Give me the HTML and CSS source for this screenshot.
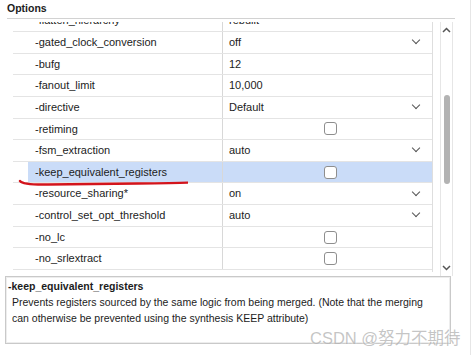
FILE: index.html
```html
<!DOCTYPE html>
<html lang="en">
<head>
    <meta charset="UTF-8">
    <title>Options</title>
    <link rel="stylesheet" href="styles.css">
</head>
<body>
<div class="panel">
    <div class="title">Options</div>
    <div class="body">
        <div class="table">
            <div class="row first"><span class="tree"></span><span class="name">-flatten_hierarchy</span><span class="val">rebuilt</span></div>
            <div class="row"><span class="tree"></span><span class="name">-gated_clock_conversion</span><span class="val">off<i class="drop"></i></span></div>
            <div class="row"><span class="tree"></span><span class="name">-bufg</span><span class="val">12</span></div>
            <div class="row"><span class="tree"></span><span class="name">-fanout_limit</span><span class="val">10,000</span></div>
            <div class="row"><span class="tree"></span><span class="name">-directive</span><span class="val">Default<i class="drop"></i></span></div>
            <div class="row"><span class="tree"></span><span class="name">-retiming</span><span class="val check"><i class="box"></i></span></div>
            <div class="row"><span class="tree"></span><span class="name">-fsm_extraction</span><span class="val">auto<i class="drop"></i></span></div>
            <div class="row sel"><span class="tree"></span><span class="name">-keep_equivalent_registers</span><span class="val check"><i class="box"></i></span></div>
            <div class="row"><span class="tree"></span><span class="name">-resource_sharing*</span><span class="val">on<i class="drop"></i></span></div>
            <div class="row"><span class="tree"></span><span class="name">-control_set_opt_threshold</span><span class="val">auto<i class="drop"></i></span></div>
            <div class="row"><span class="tree"></span><span class="name">-no_lc</span><span class="val check"><i class="box"></i></span></div>
            <div class="row"><span class="tree"></span><span class="name">-no_srlextract</span><span class="val check"><i class="box"></i></span></div>
        </div>
        <div class="scrollbar">
            <div class="arrow up"><svg width="9" height="6" viewBox="0 0 9 6"><polyline points="1,5 4.5,1.5 8,5" fill="none" stroke="#555" stroke-width="1.5"/></svg></div>
            <div class="track"><div class="thumb"></div></div>
            <div class="arrow down"><svg width="9" height="6" viewBox="0 0 9 6"><polyline points="1,1 4.5,4.5 8,1" fill="none" stroke="#555" stroke-width="1.5"/></svg></div>
        </div>
    </div>
    <div class="desc">
        <div class="desc-title">-keep_equivalent_registers</div>
        <div class="desc-text">Prevents registers sourced by the same logic from being merged. (Note that the merging can otherwise be prevented using the synthesis KEEP attribute)</div>
    </div>
    <svg class="mark" width="170" height="12" viewBox="0 0 170 12"><path d="M2 3 Q5 7 30 6.5 L120 5.5 Q160 5 172 4.5" fill="none" stroke="#d3141c" stroke-width="2.4" stroke-linecap="round"/></svg>
    <div class="watermark">CSDN @努力不期待</div>
</div>
</body>
</html>
```
FILE: styles.css
```css
*{
    margin:0;
    padding:0;
    box-sizing: border-box;
}
body{
    background: #fff;
    font-family: "Liberation Sans", Arial, sans-serif;
    color: #1c1c1c;
}
.panel{
    position: relative;
    width: 471px;
    height: 355px;
    border-right: 1px solid #e6e6e6;
}
.title{
    margin-left: 7px;
    width: 448px;
    height: 19px;
    border-bottom: 1px solid #d2d2d2;
    font-size: 10.5px;
    font-weight: bold;
    line-height: 17px;
}
.body{
    display: flex;
    margin-top: 3px;
    margin-left: 13px;
}
.table{
    width: 420px;
    height: 250px;
    overflow: hidden;
    border-right: 1px solid #dedede;
}
.row{
    display: flex;
    height: 21.65px;
    border-bottom: 1px solid #e4e4e4;
    font-size: 11px;
    line-height: 20.6px;
}
.row.first{
    margin-top: -11.7px;
}
.tree{
    width: 15px;
    flex: none;
}
.name{
    width: 194px;
    flex: none;
    padding-left: 7px;
    white-space: nowrap;
}
.val{
    flex: 1;
    display: flex;
    align-items: center;
    justify-content: space-between;
    padding: 0 11px 0 6px;
    border-left: 1px solid #d8d8d8;
}
.val.check{
    justify-content: center;
    padding: 0 0 0 6px;
}
.row.sel .name,
.row.sel .val{
    background: #cadcf8;
}
.drop{
    border-right: 1.6px solid #555;
    border-bottom: 1.6px solid #555;
    width: 6px;
    height: 6px;
    transform: rotate(45deg);
    margin-top: -4px;
    margin-right: 2px;
}
.box{
    width: 13px;
    height: 13px;
    border: 1.5px solid #8e8e8e;
    border-radius: 3px;
    background: #fff;
}
.scrollbar{
    display: flex;
    flex-direction: column;
    width: 13px;
    height: 254px;
    margin-left: 7px;
    border-left: 1px solid #e6e6e6;
    border-right: 1px solid #e6e6e6;
}
.arrow{
    height: 16px;
    display: flex;
    align-items: center;
    justify-content: center;
}
.track{
    flex: 1;
    display: flex;
    justify-content: center;
}
.thumb{
    width: 6px;
    height: 89px;
    margin-top: 57px;
    border-radius: 3px;
    background: #b3b3b3;
}
.desc{
    margin-left: 5px;
    width: 446px;
    height: 68px;
    border: 1px solid #c9c9c9;
    box-shadow: inset 0 0 0 1px #ededed;
    padding: 1px 4px 0 2px;
    font-size: 10.5px;
    line-height: 16px;
}
.desc-title{
    font-weight: bold;
}
.desc-text{
    width: 428px;
    padding-left: 4px;
}
.mark{
    position: absolute;
    left: 18px;
    top: 178px;
}
.watermark{
    position: absolute;
    left: 310px;
    top: 325px;
    font-family: "Liberation Sans", "Noto Sans CJK SC", sans-serif;
    font-size: 16.5px;
    color: rgba(140, 140, 140, 0.5);
    text-shadow: 0 0 2px #fff;
    white-space: nowrap;
}
```
